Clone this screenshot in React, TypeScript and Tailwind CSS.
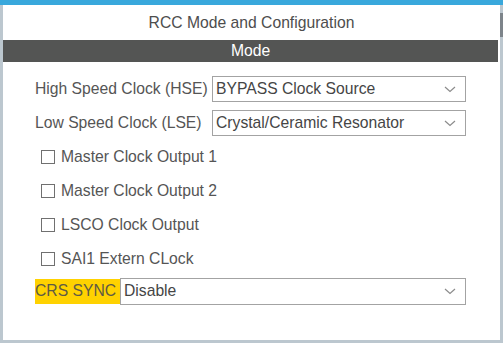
import { ChevronDown } from 'lucide-react'

const font = { fontFamily: '"Liberation Sans", Arial, sans-serif' }

function Chevron() {
    return (
        <svg width="12" height="7" viewBox="0 0 12 7" className="shrink-0">
            <polyline points="1,1 6,5.5 11,1" fill="none" stroke="#8c8c8c" strokeWidth="1.2" />
        </svg>
    )
}

function Select({ value, className = '' }: { value: string; className?: string }) {
    return (
        <div className={`flex items-center justify-between h-[26px] border border-[#a3a3a3] bg-white pl-[3px] pr-[9px] text-[#454545] ${className}`}>
            <span>{value}</span>
            <Chevron />
        </div>
    )
}

function Check({ label }: { label: string }) {
    return (
        <div className="flex items-center h-[34px] pl-[6px]">
            <div className="w-[14px] h-[14px] border border-[#707070] bg-white" />
            <span className="ml-[6px]">{label}</span>
        </div>
    )
}

export default function App() {
    void ChevronDown
    return (
        <div className="w-[503px] h-[343px] bg-[#bcc7cf] flex flex-col text-[15.7px] leading-none" style={font}>
            {/* top accent */}
            <div className="h-[5px] bg-[#39a8dc]" />

            <div className="flex flex-1">
                <div className="w-[3px]" />

                {/* panel */}
                <div className="flex-1 flex flex-col bg-white mb-[3px] text-[#555]">
                    <div className="h-[35px] flex items-center justify-center text-[#4d4d4d]">
                        RCC Mode and Configuration
                    </div>
                    <div className="h-[22px] mr-[2px] bg-[#545554] flex items-center justify-center text-white">
                        Mode
                    </div>

                    <div className="flex flex-col pt-[10px] pl-[32px] pr-[34px]">
                        <div className="flex items-center h-[34px]">
                            <span className="w-[177px] shrink-0">High Speed Clock (HSE)</span>
                            <Select value="BYPASS Clock Source" className="flex-1" />
                        </div>
                        <div className="flex items-center h-[34px]">
                            <span className="w-[177px] shrink-0">Low Speed Clock (LSE)</span>
                            <Select value="Crystal/Ceramic Resonator" className="flex-1" />
                        </div>

                        <Check label="Master Clock Output 1" />
                        <Check label="Master Clock Output 2" />
                        <Check label="LSCO Clock Output" />
                        <Check label="SAI1 Extern CLock" />

                        <div className="flex items-center h-[30px]">
                            <span className="h-[25px] w-[85px] shrink-0 bg-[#ffd200] flex items-center text-[#5e5a45]">
                                CRS SYNC
                            </span>
                            <Select value="Disable" className="flex-1 h-[27px]" />
                        </div>
                    </div>
                </div>

                {/* right edge / scroll */}
                <div className="w-[3px] flex flex-col">
                    <div className="h-[8px]" />
                    <div className="h-[24px] bg-[#7d848a]" />
                </div>
            </div>
        </div>
    )
}
